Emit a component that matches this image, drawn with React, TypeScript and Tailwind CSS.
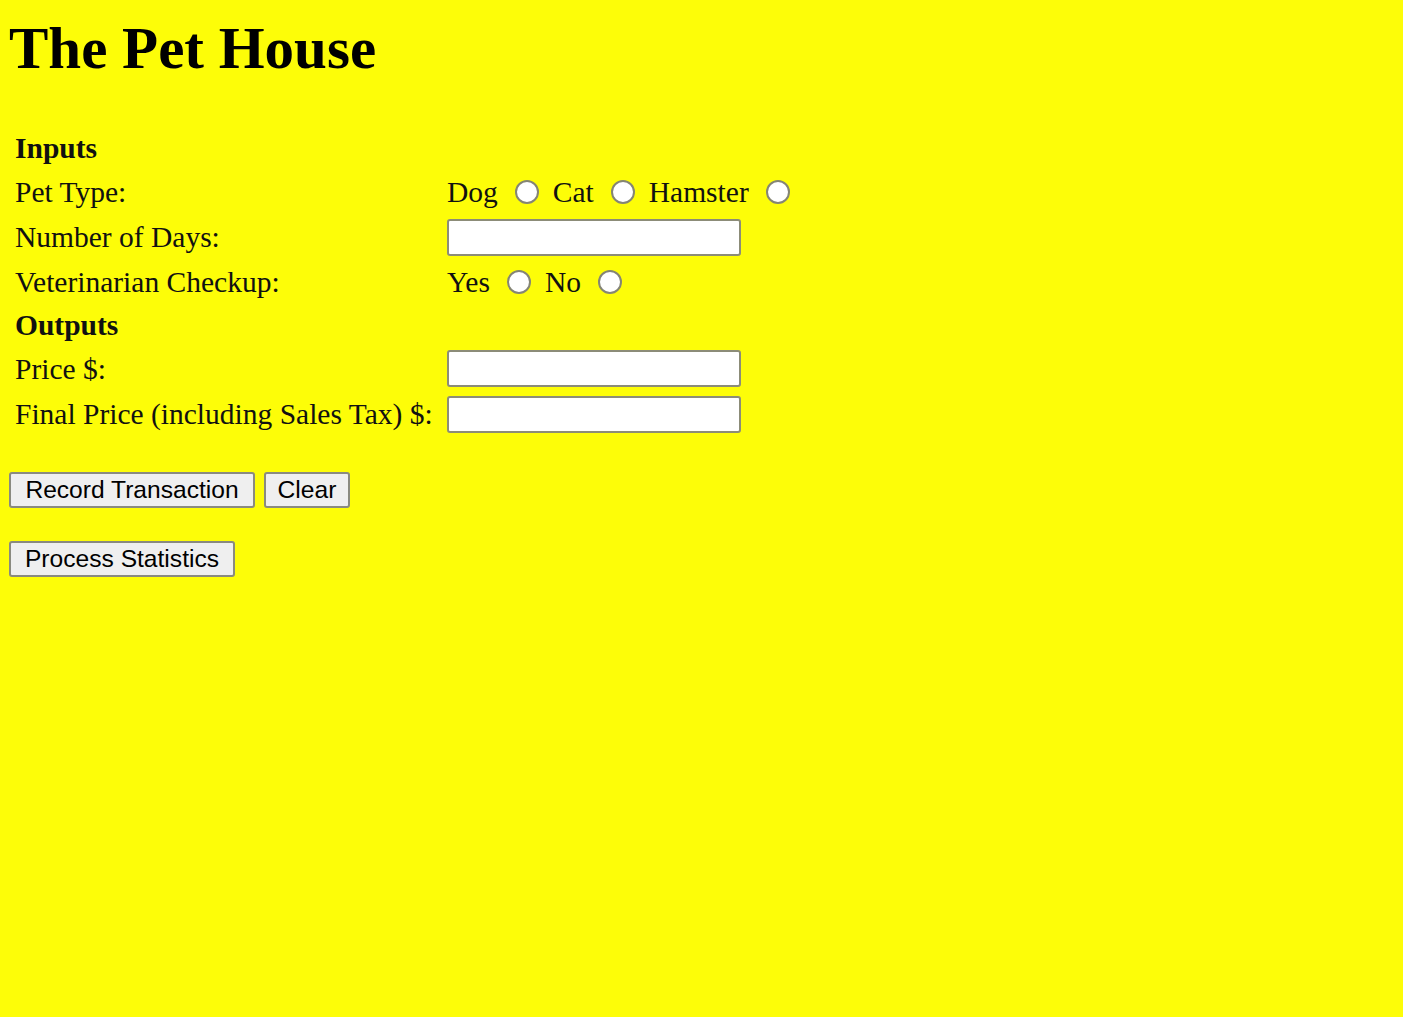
import React, { useState } from 'react';

type Row = {
  label: string;
  bold?: boolean;
  h: string;
  field?: 'pet' | 'days' | 'vet' | 'price' | 'final';
};

const rows: Row[] = [
  { label: 'Inputs', bold: true, h: 'h-[43px]' },
  { label: 'Pet Type:', h: 'h-[45px]', field: 'pet' },
  { label: 'Number of Days:', h: 'h-[46px]', field: 'days' },
  { label: 'Veterinarian Checkup:', h: 'h-[44px]', field: 'vet' },
  { label: 'Outputs', bold: true, h: 'h-[42px]' },
  { label: 'Price $:', h: 'h-[45px]', field: 'price' },
  { label: 'Final Price (including Sales Tax) $:', h: 'h-[46px]', field: 'final' },
];

const Radio: React.FC<{ checked: boolean; onClick: () => void }> = ({ checked, onClick }) => (
  <span
    onClick={onClick}
    className="ml-[17px] mr-[14px] inline-flex h-[24px] w-[24px] shrink-0 cursor-pointer items-center justify-center rounded-full border-[2px] border-[#858575] bg-white"
  >
    {checked && <span className="h-[12px] w-[12px] rounded-full bg-[#1a73e8]" />}
  </span>
);

const TextBox: React.FC<{ value: string; onChange?: (v: string) => void; readOnly?: boolean }> = ({
  value,
  onChange,
  readOnly,
}) => (
  <input
    type="text"
    value={value}
    readOnly={readOnly}
    onChange={(e) => onChange?.(e.target.value)}
    className="h-[37px] w-[294px] rounded-[3px] border-[2px] border-[#8c8c78] bg-white px-[4px] text-[24px] outline-none"
  />
);

const Btn: React.FC<{ w: string; children: React.ReactNode; onClick?: () => void }> = ({ w, children, onClick }) => (
  <button
    onClick={onClick}
    className={`${w} h-[36px] rounded-[3px] border-[2px] border-[#8a8a80] bg-[#efefef] text-center font-['Liberation_Sans',Arial,sans-serif] text-[24.6px] leading-none text-black`}
  >
    {children}
  </button>
);

export default function App() {
  const [pet, setPet] = useState('');
  const [vet, setVet] = useState('');
  const [days, setDays] = useState('');
  const [price, setPrice] = useState('');
  const [finalPrice, setFinalPrice] = useState('');

  const clear = () => {
    setPet('');
    setVet('');
    setDays('');
    setPrice('');
    setFinalPrice('');
  };

  const renderField = (field?: Row['field']) => {
    if (field === 'pet') {
      return (
        <div className="flex items-center">
          <span>Dog</span>
          <Radio checked={pet === 'dog'} onClick={() => setPet('dog')} />
          <span>Cat</span>
          <Radio checked={pet === 'cat'} onClick={() => setPet('cat')} />
          <span>Hamster</span>
          <Radio checked={pet === 'hamster'} onClick={() => setPet('hamster')} />
        </div>
      );
    }
    if (field === 'vet') {
      return (
        <div className="flex items-center">
          <span>Yes</span>
          <Radio checked={vet === 'yes'} onClick={() => setVet('yes')} />
          <span>No</span>
          <Radio checked={vet === 'no'} onClick={() => setVet('no')} />
        </div>
      );
    }
    if (field === 'days') return <TextBox value={days} onChange={setDays} />;
    if (field === 'price') return <TextBox value={price} readOnly />;
    if (field === 'final') return <TextBox value={finalPrice} readOnly />;
    return null;
  };

  return (
    <div className="min-h-screen w-full bg-[#fdfd08] pl-[9px] pt-[14px] font-['Liberation_Serif','Times_New_Roman',serif] text-[#111]">
      <h1 className="h-[68px] text-[59px] font-bold leading-[68px] text-black">The Pet House</h1>

      {/* Inputs / Outputs table */}
      <div className="ml-[6px] mt-[44px] grid grid-cols-[426px_auto] gap-x-[6px] text-[29.5px] leading-[34px]">
        {rows.map((r) => (
          <React.Fragment key={r.label}>
            <div className={`${r.h} flex items-center whitespace-nowrap ${r.bold ? 'font-bold' : ''}`}>{r.label}</div>
            <div className={`${r.h} flex items-center`}>{renderField(r.field)}</div>
          </React.Fragment>
        ))}
      </div>

      <div className="mt-[35px] flex gap-[9px]">
        <Btn w="w-[246px]">Record Transaction</Btn>
        <Btn w="w-[86px]" onClick={clear}>
          Clear
        </Btn>
      </div>

      <div className="mt-[33px]">
        <Btn w="w-[226px]">Process Statistics</Btn>
      </div>
    </div>
  );
}
